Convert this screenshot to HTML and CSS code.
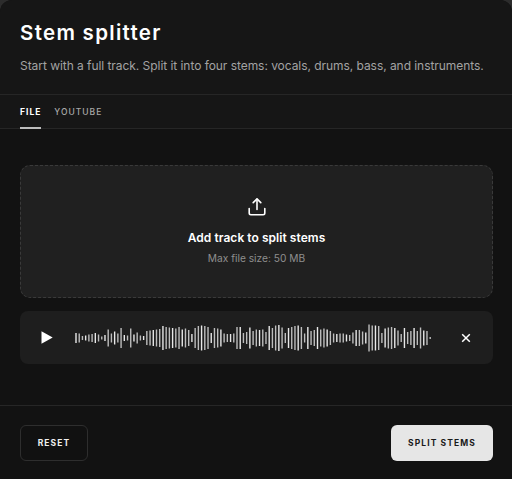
FILE: index.html
```html
<!DOCTYPE html>
<html lang="en">
<head>
    <meta charset="UTF-8">
    <meta name="viewport" content="width=device-width, initial-scale=1.0">
    <title>Stem splitter</title>
    <link rel="stylesheet" href="styles.css">
</head>
<body>
    <div class="dialog">
        <div class="header">
            <h1>Stem splitter</h1>
            <p>Start with a full track. Split it into four stems: vocals, drums, bass, and instruments.</p>
        </div>

        <div class="tabs">
            <button class="tab tab-active">FILE</button>
            <button class="tab">YOUTUBE</button>
        </div>

        <div class="content">
            <div class="dropzone">
                <svg class="upload-icon" width="20" height="20" viewBox="0 0 20 20" fill="none" stroke="#fff" stroke-width="1.6" stroke-linecap="round" stroke-linejoin="round">
                    <path d="M10 12.5V2.2"/>
                    <path d="M6.2 5.6 10 1.9l3.8 3.7"/>
                    <path d="M2.2 11.5v4.6c0 1 .7 1.7 1.7 1.7h12.2c1 0 1.7-.7 1.7-1.7v-4.6"/>
                </svg>
                <div class="drop-title">Add track to split stems</div>
                <div class="drop-note">Max file size: 50 MB</div>
            </div>

            <div class="player">
                <svg class="play-icon" width="12" height="13" viewBox="0 0 12 13" fill="#fff"><path d="M0.5 0.3 11.7 6.5 0.5 12.7z"/></svg>
                <svg class="wave" id="wave" width="358" height="30" viewBox="0 0 358 30" stroke-width="1.4"></svg>
                <svg class="close-icon" width="10" height="10" viewBox="0 0 10 10" fill="none" stroke="#fff" stroke-width="1.5"><path d="M1.2 1.2l7.6 7.6M8.8 1.2 1.2 8.8"/></svg>
            </div>
        </div>

        <div class="footer">
            <button class="btn btn-reset">RESET</button>
            <button class="btn btn-split">SPLIT STEMS</button>
        </div>
    </div>

    <script>
        // Bar heights read off the waveform, left to right
        const bars = [10,9,4,5,7,8,10,7,3,6,17,9,13,9,20,6,5,19,7,11,5,4,14,15,16,17,18,24,22,21,20,19,
            22,17,19,16,8,20,24,25,24,22,10,20,19,17,9,8,8,9,22,22,10,12,21,14,17,16,17,12,24,20,25,26,
            21,10,20,22,24,25,22,9,22,14,16,22,17,19,17,14,9,8,9,9,7,6,11,16,16,13,11,27,25,25,24,10,
            19,21,22,20,15,8,20,12,14,20,14,21,15,14,2];
        const wave = document.getElementById('wave');
        let marks = '';
        bars.forEach((h, i) => {
            const x = (1 + i * 3.22).toFixed(2);
            const shade = i % 3 === 0 ? '#e8e8e8' : '#bdbdbd';
            marks += `<line x1="${x}" x2="${x}" y1="${15 - h / 2}" y2="${15 + h / 2}" stroke="${shade}"/>`;
        });
        wave.innerHTML = marks;
    </script>
</body>
</html>
```

FILE: styles.css
```css
* {
    box-sizing: border-box;
}

body {
    margin: 0;
    background: #2c2c2c;
    font-family: 'Inter', sans-serif;
    color: #fff;
}

.dialog {
    width: 512px;
    height: 479px;
    display: flex;
    flex-direction: column;
    background: #121212;
    border-radius: 12px 12px 0 0;
    overflow: hidden;
}

.header {
    height: 95px;
    padding: 20px 19px 0 20px;
    background: #161616;
    border-bottom: 1px solid #262626;
}

h1 {
    margin: 0 0 11px;
    font-size: 20.5px;
    line-height: 25px;
    font-weight: 600;
    letter-spacing: 1.3px;
}

.header p {
    margin: 0;
    font-size: 12px;
    line-height: 20px;
    letter-spacing: -0.05px;
    color: #a3a3a3;
    white-space: nowrap;
}

.tabs {
    height: 34px;
    display: flex;
    gap: 13px;
    padding: 0 20px;
    background: #161616;
    border-bottom: 1px solid #262626;
}

.tab {
    height: 34px;
    padding: 2px 0 0;
    background: none;
    border: none;
    border-bottom: 2px solid transparent;
    font-family: inherit;
    font-size: 8.5px;
    font-weight: 500;
    letter-spacing: 1px;
    color: #a8a8a8;
}

.tab-active {
    color: #fff;
    font-weight: 700;
    border-bottom-color: #bdbdbd;
}

.content {
    flex: 1;
    display: flex;
    flex-direction: column;
    gap: 13px;
    padding: 36px 19px 0 20px;
    border-bottom: 1px solid #262626;
}

.dropzone {
    height: 133px;
    display: flex;
    flex-direction: column;
    align-items: center;
    background: #202020;
    border: 1px dashed #3a3a3a;
    border-radius: 10px;
    padding-top: 31px;
}

.drop-title {
    margin-top: 12px;
    font-size: 12px;
    line-height: 18px;
    font-weight: 600;
    letter-spacing: 0.05px;
}

.drop-note {
    margin-top: 3px;
    font-size: 10.2px;
    line-height: 16px;
    color: #8f8f8f;
}

.player {
    height: 53px;
    display: flex;
    align-items: center;
    padding: 0 22px 0 21px;
    background: #1e1e1e;
    border-radius: 8px;
}

.wave {
    margin-left: 22px;
}

.close-icon {
    margin-left: auto;
}

.footer {
    height: 73px;
    display: flex;
    justify-content: space-between;
    padding: 19px 19px 0 20px;
}

.btn {
    height: 36px;
    border-radius: 6px;
    font-family: inherit;
    font-size: 8.5px;
    font-weight: 700;
    letter-spacing: 1.1px;
}

.btn-reset {
    width: 68px;
    background: #111;
    color: #f0f0f0;
    border: 1px solid #2e2e2e;
}

.btn-split {
    width: 102px;
    background: #e6e6e6;
    color: #1a1a1a;
    border: none;
}
```
